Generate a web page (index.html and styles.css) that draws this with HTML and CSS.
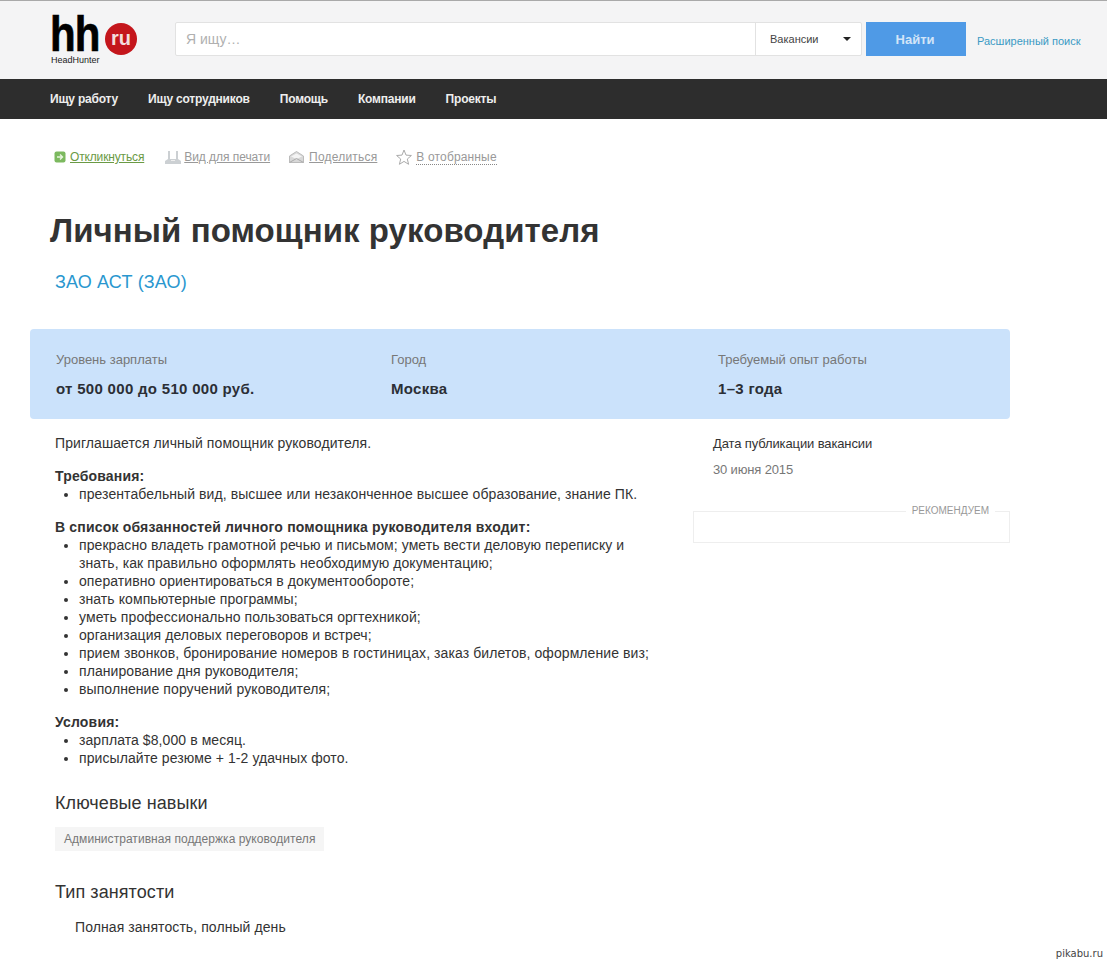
FILE: index.html
```html
<!DOCTYPE html>
<html lang="en">
<head>
    <meta charset="UTF-8">
    <meta name="viewport" content="width=device-width, initial-scale=1.0">
    <title>Личный помощник руководителя</title>
    <link rel="stylesheet" href="styles.css">
</head>
<body>
    <header class="header">
        <div class="logo">
            <div class="logo-top">
                <span class="logo-hh">hh</span>
                <span class="logo-ru">ru</span>
            </div>
            <div class="logo-name">HeadHunter</div>
        </div>
        <div class="search">
            <div class="search-input">Я ищу…</div>
            <div class="search-type">Вакансии<span class="caret"></span></div>
        </div>
        <button class="search-btn">Найти</button>
        <a class="search-adv">Расширенный поиск</a>
    </header>

    <nav class="nav">
        <a>Ищу работу</a>
        <a>Ищу сотрудников</a>
        <a>Помощь</a>
        <a>Компании</a>
        <a>Проекты</a>
    </nav>

    <div class="actions">
        <span class="action action-respond">
            <svg width="12" height="12" viewBox="0 0 12 12"><rect x="0.5" y="0.5" width="11" height="11" rx="2" fill="#7cb95f"/><path d="M3 6h5M6 3.500L8.500 6 6 8.500" stroke="#e8f5df" stroke-width="1.400" fill="none"/></svg>
            <a>Откликнуться</a>
        </span>
        <span class="action action-print">
            <svg width="16" height="14" viewBox="0 0 16 14"><path d="M0 14v-3l3-2V1h2v8h6V1h2v8l3 2v3z" fill="#ccd0d3"/><path d="M6 10.500h4" stroke="#eee"/></svg>
            <a>Вид для печати</a>
        </span>
        <span class="action action-share">
            <svg width="15" height="12" viewBox="0 0 15 12"><path d="M0.500 5L7.500 0.500 14.500 5v6.500h-14z" fill="#d8d8d8" stroke="#bbb"/><path d="M2 5.500L7.500 2.500 13 5.500 7.500 8z" fill="#f4f4f4"/><path d="M0.500 11.500L7.500 7.500l7 4" fill="none" stroke="#aaa"/></svg>
            <a>Поделиться</a>
        </span>
        <span class="action action-fav">
            <svg width="16" height="16" viewBox="0 0 16 16"><path d="M8 1l2 5.100 5.400.4-4.100 3.500 1.300 5.300L8 12.400l-4.600 2.900 1.300-5.300L.6 6.500 6 6.100z" fill="#fff" stroke="#aaa"/></svg>
            <a class="dotted">В отобранные</a>
        </span>
    </div>

    <h1 class="title">Личный помощник руководителя</h1>
    <a class="company">ЗАО АСТ (ЗАО)</a>

    <section class="summary">
        <div class="summary-col col-salary">
            <div class="summary-label">Уровень зарплаты</div>
            <div class="summary-value">от 500 000 до 510 000 руб.</div>
        </div>
        <div class="summary-col col-city">
            <div class="summary-label">Город</div>
            <div class="summary-value">Москва</div>
        </div>
        <div class="summary-col">
            <div class="summary-label">Требуемый опыт работы</div>
            <div class="summary-value">1–3 года</div>
        </div>
    </section>

    <div class="columns">
        <main class="description">
            <p>Приглашается личный помощник руководителя.</p>
            <p class="list-title">Требования:</p>
            <ul>
                <li>презентабельный вид, высшее или незаконченное высшее образование, знание ПК.</li>
            </ul>
            <p class="list-title">В список обязанностей личного помощника руководителя входит:</p>
            <ul>
                <li>прекрасно владеть грамотной речью и письмом; уметь вести деловую переписку и знать, как правильно оформлять необходимую документацию;</li>
                <li>оперативно ориентироваться в документообороте;</li>
                <li>знать компьютерные программы;</li>
                <li>уметь профессионально пользоваться оргтехникой;</li>
                <li>организация деловых переговоров и встреч;</li>
                <li>прием звонков, бронирование номеров в гостиницах, заказ билетов, оформление виз;</li>
                <li>планирование дня руководителя;</li>
                <li>выполнение поручений руководителя;</li>
            </ul>
            <p class="list-title">Условия:</p>
            <ul>
                <li>зарплата $8,000 в месяц.</li>
                <li>присылайте резюме + 1-2 удачных фото.</li>
            </ul>

            <h2 class="skills-title">Ключевые навыки</h2>
            <span class="skill">Административная поддержка руководителя</span>

            <h2 class="type-title">Тип занятости</h2>
            <p class="type-value">Полная занятость, полный день</p>
        </main>

        <aside class="side">
            <div class="side-label">Дата публикации вакансии</div>
            <div class="side-date">30 июня 2015</div>
            <div class="recommend">
                <span class="recommend-label">РЕКОМЕНДУЕМ</span>
            </div>
        </aside>
    </div>

    <div class="watermark">pikabu.ru</div>
</body>
</html>
```

FILE: styles.css
```css
html, body {
    margin: 0;
    padding: 0;
}
body {
    font-family: "Liberation Sans", Arial, sans-serif;
    font-size: 14px;
    color: #333;
    background: #fff;
    height: 964px;
    overflow: hidden;
    position: relative;
}
a {
    cursor: pointer;
}

/* header */
.header {
    display: flex;
    align-items: flex-start;
    height: 78px;
    background: #f4f4f5;
    border-top: 1px solid #a9a9a9;
    padding-left: 50px;
}
.logo {
    width: 125px;
    padding-top: 12px;
}
.logo-top {
    display: flex;
    height: 42px;
}
.logo-hh {
    width: 55px;
    font-size: 50px;
    font-weight: bold;
    line-height: 42px;
    letter-spacing: -1px;
    color: #000;
    -webkit-text-stroke: .7px #000;
    transform: scaleX(.84);
    transform-origin: left;
}
.logo-ru {
    width: 32px;
    height: 32px;
    margin-top: 10px;
    border-radius: 50%;
    background: #c4161c;
    color: #f3dede;
    font-size: 20px;
    font-weight: bold;
    line-height: 30px;
    text-align: center;
}
.logo-name {
    margin-left: 1px;
    font-size: 9px;
    line-height: 11px;
    color: #222;
}
.search {
    display: flex;
    width: 687px;
    height: 34px;
    margin-top: 21px;
    box-sizing: border-box;
    background: #fff;
    border: 1px solid #e2e2e2;
    border-radius: 2px;
}
.search-input {
    flex: 1;
    padding-left: 10px;
    font-size: 14px;
    line-height: 32px;
    color: #b0b0b0;
}
.search-type {
    display: flex;
    align-items: center;
    justify-content: space-between;
    box-sizing: border-box;
    width: 106px;
    padding: 0 10px 0 14px;
    border-left: 1px solid #e2e2e2;
    font-size: 11px;
    color: #444;
}
.caret {
    border-top: 4px solid #222;
    border-left: 4px solid transparent;
    border-right: 4px solid transparent;
}
.search-btn {
    width: 100px;
    height: 34px;
    margin: 21px 0 0 4px;
    padding: 0 2px 0 0;
    border: none;
    background: #4f9ae6;
    color: #d3e5f8;
    font-family: inherit;
    font-size: 13px;
    font-weight: bold;
}
.search-adv {
    margin: 33px 0 0 11px;
    font-size: 11px;
    line-height: 14px;
    color: #3a9ac4;
}

/* nav */
.nav {
    display: flex;
    gap: 30px;
    height: 40px;
    padding-left: 50px;
    background: #2d2d2d;
    color: #eee;
    font-size: 12px;
    font-weight: bold;
    line-height: 41px;
    letter-spacing: -.2px;
}

/* actions */
.actions {
    display: flex;
    align-items: center;
    height: 20px;
    margin: 28px 0 0 54px;
    font-size: 12px;
    color: #999;
}
.action {
    display: flex;
    align-items: center;
}
.action a {
    text-decoration: underline;
}
.action-respond {
    gap: 4px;
    margin-right: 21px;
    color: #6a9a45;
    letter-spacing: -.15px;
}
.action-print {
    gap: 3px;
    margin-right: 19px;
    letter-spacing: -.05px;
}
.action-share {
    gap: 5px;
    margin-right: 19px;
    letter-spacing: .2px;
}
.action-fav {
    gap: 4px;
    letter-spacing: .15px;
}
.action .dotted {
    text-decoration: none;
    border-bottom: 1px dotted #888;
}

/* title */
.title {
    margin: 45px 0 0 50px;
    font-size: 33px;
    line-height: 38px;
    font-weight: bold;
    letter-spacing: .07px;
    color: #333;
}
.company {
    display: block;
    margin: 21px 0 0 55px;
    font-size: 18px;
    line-height: 22px;
    letter-spacing: .15px;
    color: #2a97cf;
}

/* summary box */
.summary {
    display: flex;
    box-sizing: border-box;
    width: 980px;
    height: 90px;
    margin: 36px 0 0 30px;
    padding: 22px 0 0 26px;
    background: #cbe2fb;
    border-radius: 4px;
}
.summary-col {
    flex: 0 0 auto;
}
.col-salary {
    width: 335px;
}
.col-city {
    width: 327px;
}
.summary-label {
    font-size: 13px;
    line-height: 18px;
    color: #777;
}
.summary-value {
    margin-top: 11px;
    font-size: 15px;
    line-height: 18px;
    font-weight: bold;
    letter-spacing: .3px;
    color: #2b2f36;
}

/* body columns */
.columns {
    display: flex;
    margin-top: 15px;
    padding-left: 55px;
}
.description {
    box-sizing: border-box;
    width: 638px;
    padding-right: 38px;
    line-height: 18px;
    letter-spacing: .08px;
}
.description p {
    margin: 0 0 15px;
}
.description .list-title {
    margin: 0;
    font-weight: bold;
    letter-spacing: .18px;
}
.description ul {
    margin: 0 0 15px;
    padding-left: 24px;
}
.skills-title, .type-title {
    margin: 0;
    font-size: 18px;
    line-height: 22px;
    font-weight: normal;
}
.skills-title {
    margin-top: 25px;
}
.skill {
    display: inline-block;
    margin-top: 13px;
    padding: 0 9px;
    background: #f5f5f5;
    font-size: 12px;
    line-height: 24px;
    letter-spacing: .05px;
    color: #777;
}
.type-title {
    margin-top: 30px;
}
.description .type-value {
    margin: 15px 0 0 20px;
}

/* side */
.side {
    width: 317px;
    padding-top: 1px;
}
.side-label {
    margin-left: 20px;
    font-size: 13px;
    line-height: 18px;
    letter-spacing: -.12px;
}
.side-date {
    margin: 8px 0 0 20px;
    font-size: 13px;
    line-height: 18px;
    letter-spacing: -.15px;
    color: #777;
}
.recommend {
    position: relative;
    height: 32px;
    margin-top: 32px;
    border: 1px solid #eee;
    box-sizing: border-box;
}
.recommend-label {
    position: absolute;
    top: -7px;
    right: 14px;
    padding: 0 6px;
    background: #fff;
    font-size: 10px;
    line-height: 12px;
    color: #999;
}

.watermark {
    position: absolute;
    right: 4px;
    bottom: 5px;
    font-family: "DejaVu Sans", sans-serif;
    font-size: 10px;
    color: #444;
}
```
